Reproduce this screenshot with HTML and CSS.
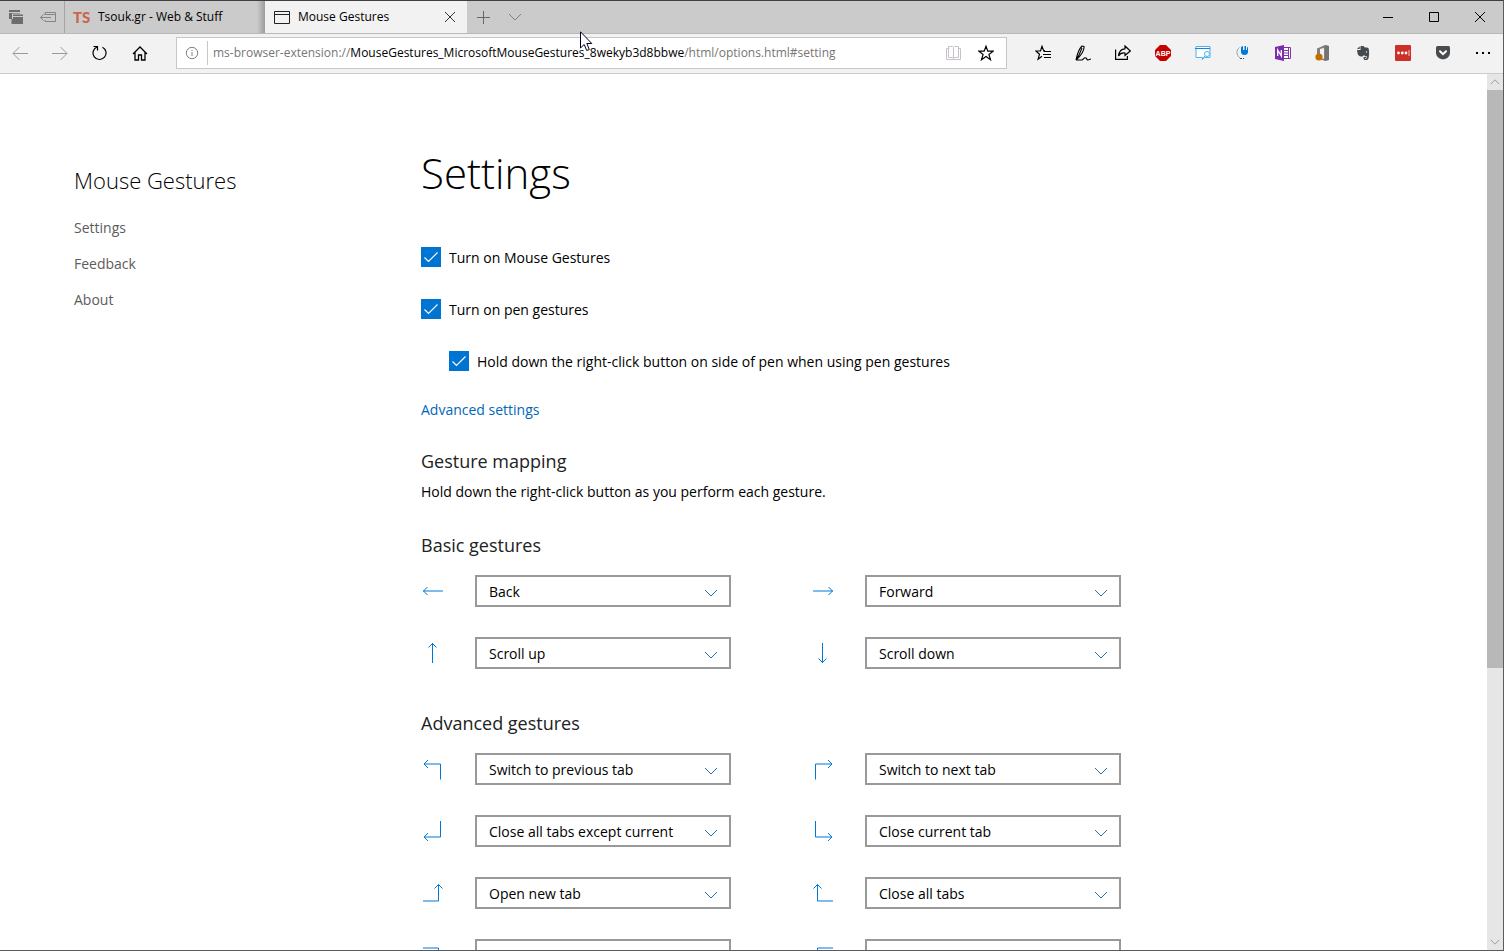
FILE: index.html
```html
<!DOCTYPE html>
<html lang="en">
<head>
<meta charset="utf-8">
<title>Mouse Gestures</title>
<link rel="stylesheet" href="styles.css">
</head>
<body>
<svg class="defs" aria-hidden="true">
  <symbol id="chevron" viewBox="0 0 14 8"><path d="M1 1l6 6 6-6"/></symbol>
</svg>
<div class="window">
  <header class="tabbar">
    <div class="tab-tools">
      <button class="tool" aria-label="Tabs you've set aside"><svg width="16" height="16" viewBox="0 0 16 16"><path fill="#6d6d6d" d="M1 1h11v3.500H4V10H1zM5 5.500h10V15H3.500V10H5z"/><path stroke="#cbcbcb" d="M1 3.500h11M5 7.500h10"/></svg></button>
      <button class="tool" aria-label="Set these tabs aside"><svg width="16" height="16" viewBox="0 0 16 16" fill="none" stroke="#858585"><path d="M5 6V3.500h10.500v9H5V11M5 5.500h10.500M.5 8.500H11M3.500 5.500l-3 3 3 3"/></svg></button>
    </div>
    <div class="tab tab-first"><span class="favicon">TS</span><span>Tsouk.gr - Web &amp; Stuff</span></div>
    <div class="tab tab-active">
      <svg width="16" height="14" viewBox="0 0 16 14" fill="none" stroke="#222"><path d="M.5 1.500h15v12H.5zM.5 4.500h15"/></svg>
      <span class="tab-title">Mouse Gestures</span>
      <button class="close" aria-label="Close tab"><svg width="12" height="12" viewBox="0 0 12 12" stroke="#333"><path d="M1 1l10 10M11 1L1 11"/></svg></button>
    </div>
    <button class="new" aria-label="New tab"><svg width="14" height="14" viewBox="0 0 14 14" stroke="#666"><path d="M7.500 1v13M1 7.500h13"/></svg></button>
    <button class="new" aria-label="Show tab previews"><svg class="chev grey" width="14" height="8"><use href="#chevron"/></svg></button>
    <div class="controls">
      <button aria-label="Minimize"><svg width="12" height="12" viewBox="0 0 12 12" stroke="#000"><path d="M1 6.500h10"/></svg></button>
      <button aria-label="Maximize"><svg width="12" height="12" viewBox="0 0 12 12" stroke="#000" fill="none"><path d="M1.500 1.500h9v9h-9z"/></svg></button>
      <button aria-label="Close"><svg width="12" height="12" viewBox="0 0 12 12" stroke="#000"><path d="M1 1l10 10M11 1L1 11"/></svg></button>
    </div>
  </header>

  <div class="toolbar">
    <nav class="buttons" aria-label="Navigation">
      <button aria-label="Back"><svg width="16" height="16" viewBox="0 0 16 16" fill="none" stroke="#999"><path d="M1 8.500h15M7.500 2L1 8.500 7.500 15"/></svg></button>
      <button aria-label="Forward"><svg width="16" height="16" viewBox="0 0 16 16" fill="none" stroke="#999"><path d="M0 8.500h15M8.500 2L15 8.500 8.500 15"/></svg></button>
      <button aria-label="Refresh"><svg width="16" height="16" viewBox="0 0 16 16" fill="none" stroke="#000" stroke-width="1.200"><path d="M10.500 2.200A6.500 6.500 0 1 1 5 2M1.500 1.500H5.500V5.500"/></svg></button>
      <button aria-label="Home"><svg width="16" height="16" viewBox="0 0 16 16" fill="none" stroke="#000" stroke-width="1.300"><path d="M1 9l7-7 7 7M3 7.500v7.500h3.500v-5h3v5H13V7.500"/></svg></button>
    </nav>
    <div class="address">
      <button class="info" aria-label="Site information"><svg width="14" height="14" viewBox="0 0 14 14" fill="none" stroke="#808080"><circle cx="7" cy="7" r="5.700"/><path d="M7 6v4M7 4v1"/></svg></button>
      <div class="url" role="textbox" contenteditable="true" spellcheck="false" aria-label="Address">ms-browser-extension://<span class="host">MouseGestures_MicrosoftMouseGestures_8wekyb3d8bbwe</span>/html/options.html#setting</div>
      <button class="addr-btn" aria-label="Reading view"><svg width="16" height="16" viewBox="0 0 16 16" fill="none" stroke="#cbbfcc"><path d="M7.500 2.500L6.500 1.500h-4v11h4l1 1 1-1h4v-11h-4l-1 1v11M2.500 3.500h-2v11h14v-11h-2"/></svg></button>
      <button class="addr-btn" aria-label="Add to favorites"><svg width="16" height="16" viewBox="0 0 16 16" fill="none" stroke="#000" stroke-width="1.200"><path d="M8 1.200l1.800 5h5.400l-4.300 3.200 1.600 5.300L8 11.500l-4.500 3.200 1.600-5.300L.8 6.200h5.400z"/></svg></button>
    </div>
    <div class="buttons">
      <button aria-label="Hub"><svg width="16" height="16" viewBox="0 0 16 16" fill="none" stroke="#000" stroke-width="1.200"><path d="M10 5.700L8.500 5.200 7 1.300 5.500 6H.8l3.700 3.200-1.400 5L7 11.300M8.500 6.500H16M8 9.500h8M9 12.500h7"/></svg></button>
      <button aria-label="Add notes"><svg width="16" height="16" viewBox="0 0 16 16" fill="none" stroke="#000" stroke-width="1.100"><path d="M1 15C2 10 4 4 7 1l2 .5C9.500 5 6 11 1 15l3-5 3-7M1 15h6c2-1 2-3 4-2 1 1 1 2 2 2l3-1"/></svg></button>
      <button aria-label="Share"><svg width="16" height="16" viewBox="0 0 16 16" fill="none" stroke="#000" stroke-width="1.200"><path d="M.6 4.500v9.900h11.800V11M10 1l5.300 5L10 10.500V8C7 7.500 5 8.500 3.500 11 4 6.500 6.500 4 10 3.800z"/></svg></button>
      <button aria-label="Adblock Plus"><svg width="16" height="16" viewBox="0 0 16 16"><path fill="#c80000" d="M5 0h6l5 5v6l-5 5H5l-5-5V5z"/><text class="abp" x="8" y="11" text-anchor="middle">ABP</text></svg></button>
      <button aria-label="Page Analyzer"><svg width="16" height="16" viewBox="0 0 16 16" fill="none" stroke="#4db2f0"><path fill="#fff" d="M1 1.500h14v11H9.500l-2 2v-2H1z"/><path stroke="#0c8ae0" d="M0 3.500h15"/><circle cx="12" cy="9" r="2.500" fill="#fff"/><path d="M10 11l-3 3.500"/></svg></button>
      <button aria-label="Mouse Gestures"><svg width="16" height="16" viewBox="0 0 16 16" fill="none"><path fill="#0078d7" d="M6 2l2-1v4h1.500V1h1.500v4h1V1.500L13 3v4c0 2-1.500 3-3.500 3S6 9 6 7z"/><path stroke="#8aa5bd" d="M4.500 2.500C1 5 1 10 5 13"/><path stroke="#345" stroke-dasharray="2 1" d="M5 13.500h4"/></svg></button>
      <button aria-label="OneNote Clipper"><svg width="16" height="16" viewBox="0 0 16 16"><path fill="#fff" stroke="#8030a8" d="M8 2.500h7.500v11H8"/><path stroke="#8030a8" d="M9 5.500h4M9 8h4M9 10.500h4M13.500 2v12"/><path fill="#7b2ca8" d="M0 2l9-2v16l-9-2z"/><path fill="none" stroke="#fff" stroke-width="1.300" d="M2.700 11V5l3.600 6V5"/></svg></button>
      <button aria-label="Office Online"><svg width="16" height="16" viewBox="0 0 16 16"><path fill="#808080" d="M2 3.500L10 0l4 1v14l-4 1-8-3 7 .7V3L5 4v7l-3 1z"/><path fill="#666" d="M10 0l4 1v14l-4 1z" opacity=".5"/><circle cx="4" cy="12" r="3.600" fill="#c46e00"/></svg></button>
      <button aria-label="Evernote"><svg width="16" height="16" viewBox="0 0 16 16"><path fill="#454a4e" d="M5.500 1h3l1 1.200 3.500.5c1 .2 1.500 5.500.8 9C13.500 15 12 15 9.800 15c-1.600-.3-2-3 .2-3.200h1v1.200h-1c-.5.400 0 1 1 .7 1-.5.800-2.200.5-2.700-1.500.2-2-.5-2.500-1L8 11.200C5 12 3 11 2.500 8L2 5h3.500z"/><path fill="#454a4e" d="M2 4l2.700-2.700V4z"/><circle cx="11.500" cy="7" r=".7" fill="#f2f2f2"/></svg></button>
      <button aria-label="LastPass"><svg width="16" height="16" viewBox="0 0 16 16"><rect width="16" height="16" rx="1" fill="#cc3127"/><circle cx="3.500" cy="8" r="1.400" fill="#fff"/><circle cx="7.300" cy="8" r="1.400" fill="#fff"/><circle cx="11" cy="8" r="1.400" fill="#fff"/><path stroke="#fff" stroke-opacity=".7" d="M14 5v6"/></svg></button>
      <button aria-label="Save to Pocket"><svg width="16" height="16" viewBox="0 0 16 16"><path fill="#484c4f" d="M1 2.500Q1 1 2.500 1h11Q15 1 15 2.500V7.500c0 9-14 9-14 0z"/><path fill="none" stroke="#fff" stroke-width="2" stroke-linecap="round" d="M5 6.200l3 3 3-3"/></svg></button>
      <button aria-label="More"><svg width="16" height="16" viewBox="0 0 16 16"><path d="M1 7h2v2H1zM7 7h2v2H7zM13 7h2v2h-2z"/></svg></button>
    </div>
  </div>

  <div class="viewport">
    <div class="page">
      <aside class="side">
        <div class="brand">Mouse Gestures</div>
        <nav class="links"><a href="#setting">Settings</a><a href="#feedback">Feedback</a><a href="#about">About</a></nav>
      </aside>
      <main>
        <h1>Settings</h1>
        <div class="checks">
          <label class="check"><input type="checkbox" checked>Turn on Mouse Gestures</label>
          <label class="check"><input type="checkbox" checked>Turn on pen gestures</label>
          <label class="check nested"><input type="checkbox" checked>Hold down the right-click button on side of pen when using pen gestures</label>
        </div>
        <a class="advanced" href="#advanced">Advanced settings</a>
        <h2>Gesture mapping</h2>
        <p>Hold down the right-click button as you perform each gesture.</p>
        <h3>Basic gestures</h3>
        <div class="grid">
          <div class="gesture"><svg class="arrow"><path d="M22 12H2M6.500 8L2.500 12l4 4"/></svg><div class="pick"><select aria-label="Left"><option>Back</option></select><svg class="chev"><use href="#chevron"/></svg></div></div>
          <div class="gesture"><svg class="arrow"><path d="M2 12h20M17.500 8l4 4-4 4"/></svg><div class="pick"><select aria-label="Right"><option>Forward</option></select><svg class="chev"><use href="#chevron"/></svg></div></div>
          <div class="gesture"><svg class="arrow"><path d="M11.500 22V2M7.500 6.500l4-4 4 4"/></svg><div class="pick"><select aria-label="Up"><option>Scroll up</option></select><svg class="chev"><use href="#chevron"/></svg></div></div>
          <div class="gesture"><svg class="arrow"><path d="M11.500 2v20M7.500 17.500l4 4 4-4"/></svg><div class="pick"><select aria-label="Down"><option>Scroll down</option></select><svg class="chev"><use href="#chevron"/></svg></div></div>
        </div>
        <h3 class="later">Advanced gestures</h3>
        <div class="grid">
          <div class="gesture"><svg class="arrow"><path d="M19.500 22.500V7H3M7 3L3 7l4 4"/></svg><div class="pick"><select aria-label="Up, then left"><option>Switch to previous tab</option></select><svg class="chev"><use href="#chevron"/></svg></div></div>
          <div class="gesture"><svg class="arrow"><path d="M4.500 22.500V7H21M17 3l4 4-4 4"/></svg><div class="pick"><select aria-label="Up, then right"><option>Switch to next tab</option></select><svg class="chev"><use href="#chevron"/></svg></div></div>
          <div class="gesture"><svg class="arrow"><path d="M19.500 2v16H3M7 14l-4 4 4 4"/></svg><div class="pick"><select aria-label="Down, then left"><option>Close all tabs except current</option></select><svg class="chev"><use href="#chevron"/></svg></div></div>
          <div class="gesture"><svg class="arrow"><path d="M4.500 2v16H21M17 14l4 4-4 4"/></svg><div class="pick"><select aria-label="Down, then right"><option>Close current tab</option></select><svg class="chev"><use href="#chevron"/></svg></div></div>
          <div class="gesture"><svg class="arrow"><path d="M2 20h15.500V3.500M13.500 7.500l4-4 4 4"/></svg><div class="pick"><select aria-label="Right, then up"><option>Open new tab</option></select><svg class="chev"><use href="#chevron"/></svg></div></div>
          <div class="gesture"><svg class="arrow"><path d="M22 20H6.500V3.500M2.500 7.500l4-4 4 4"/></svg><div class="pick"><select aria-label="Left, then up"><option>Close all tabs</option></select><svg class="chev"><use href="#chevron"/></svg></div></div>
          <div class="gesture"><svg class="arrow"><path d="M2 5h15.500v16M13.500 17l4 4 4-4"/></svg><div class="pick"><select aria-label="Right, then down"></select><svg class="chev"><use href="#chevron"/></svg></div></div>
          <div class="gesture"><svg class="arrow"><path d="M22 5H6.500v16M2.500 17l4 4 4-4"/></svg><div class="pick"><select aria-label="Left, then down"></select><svg class="chev"><use href="#chevron"/></svg></div></div>
        </div>
      </main>
    </div>
    <div class="scrollbar">
      <button aria-label="Scroll page up"><svg class="chev grey flip" width="10" height="6"><use href="#chevron"/></svg></button>
      <div class="track"><div class="thumb"></div></div>
      <button aria-label="Scroll page down"><svg class="chev grey" width="10" height="6"><use href="#chevron"/></svg></button>
    </div>
  </div>
</div>
<svg class="cursor" width="13" height="21" viewBox="0 0 13 21"><path fill="#fff" stroke="#000020" d="M.5.800V17l3.700-3.500 2.500 6 2.600-1-2.500-6h5z"/></svg>
</body>
</html>
```
FILE: styles.css
```css
* { box-sizing: border-box; }
body {
  margin: 0;
  font-family: "Open Sans", "Noto Sans", sans-serif;
  font-size: 14px;
  line-height: 20px;
  color: #000;
}
button { border: 0; padding: 0; background: none; display: flex; align-items: center; justify-content: center; }
svg { flex: none; }
a { text-decoration: none; }
.defs { display: none; }
.window {
  height: 100vh;
  display: flex;
  flex-direction: column;
  border: 1px solid #5c5a5c;
  border-left: 0;
  border-top-color: #413d41;
  overflow: hidden;
}

.tabbar { display: flex; height: 32px; flex: none; background: #cbcbcb; font-size: 12px; }
.tab-tools { display: flex; width: 65px; border-right: 1px solid #a5a5a5; }
.tool { width: 32px; }
.tab { display: flex; align-items: center; gap: 8px; padding-left: 8px; }
.tab-first { width: 200px; background: linear-gradient(to right, transparent 96%, #9b9b9b); }
.favicon { width: 17px; font: 900 15px/20px Lato, sans-serif; color: #c9664f; }
.tab-active { width: 202px; padding: 0 11px 0 9px; background: #f2f2f2; }
.tab-title { flex: 1; }
.close { width: 12px; height: 32px; }
.new { width: 32px; }
.controls { display: flex; margin-left: auto; }
.controls button { width: 46px; }

.toolbar {
  display: flex;
  align-items: center;
  height: 41px;
  flex: none;
  padding-bottom: 2px;
  background: #f2f2f2;
  border-top: 1px solid #b8b8b8;
  border-bottom: 1px solid #ccc;
}
.buttons { display: flex; }
.buttons button { width: 40px; height: 36px; }
.abp { font: bold 7px "Liberation Sans", sans-serif; fill: #fff; }
.address {
  flex: 1;
  min-width: 0;
  display: flex;
  align-items: center;
  height: 32px;
  margin: 0 16px;
  border: 1px solid #c8c6c8;
  background: #fff;
}
.info { width: 31px; height: 24px; border-right: 1px solid #c8c6c8; }
.url { flex: 1; min-width: 0; padding-left: 5px; font-size: 12px; color: #767676; white-space: nowrap; overflow: hidden; outline: 0; }
.host { color: #000; }
.addr-btn { width: 32px; height: 30px; }
.addr-btn:last-child { width: 36px; padding-right: 4px; }

.viewport { flex: 1; min-height: 0; display: flex; }
.page { flex: 1; min-width: 0; display: flex; overflow: hidden; padding-left: 74px; }
.side { width: 347px; flex: none; padding-top: 90px; }
.brand { font-size: 22px; line-height: 32px; font-weight: 300; }
.links { display: flex; flex-direction: column; align-items: flex-start; gap: 16px; margin-top: 22px; }
.links a { color: #5c5c5c; }
main { flex: 1; padding-top: 69px; }
h1, h2, h3, p { margin: 0; }
h1 { font-size: 42px; line-height: 60px; font-weight: 300; }
.checks { display: flex; flex-direction: column; align-items: flex-start; gap: 30px; margin: 44px 0 27px; }
.check { display: flex; align-items: flex-start; gap: 8px; line-height: 22px; }
.nested { margin-left: 28px; }
.check input {
  appearance: none;
  width: 20px;
  height: 20px;
  margin: 0;
  background: #0074d1 url("data:image/svg+xml,%3Csvg xmlns='http://www.w3.org/2000/svg' viewBox='0 0 20 20'%3E%3Cpath d='M3.500 10.500l4 4 9-9' fill='none' stroke='white' stroke-width='1.200'/%3E%3C/svg%3E");
}
.advanced { display: block; width: max-content; color: #0067b8; }
h2, h3 { font-size: 18px; line-height: 28px; font-weight: 400; color: #222; }
h2 { margin: 27px 0 7px; }
h3 { margin: 29px 0 16px; }
.later { margin-top: 40px; }
.grid { display: grid; grid-template-columns: 310px 310px; gap: 30px 80px; }
.gesture { display: flex; justify-content: space-between; }
.arrow { width: 24px; height: 24px; margin-top: 4px; fill: none; stroke: #0078d7; stroke-width: 1; }
.pick { position: relative; width: 256px; }
.pick select {
  appearance: none;
  display: block;
  width: 100%;
  height: 32px;
  padding: 2px 12px 0;
  border: 2px solid #999;
  border-radius: 0;
  background: #fff;
  font: inherit;
  color: #000;
}
.chev { fill: none; stroke: #2b6ea8; }
.pick .chev { position: absolute; right: 13px; top: 14px; width: 14px; height: 8px; pointer-events: none; }
.chev.grey { stroke: #808080; }
.flip { transform: rotate(180deg); }

.scrollbar { width: 16px; flex: none; display: flex; flex-direction: column; background: #e6e6e6; }
.scrollbar button { height: 16px; }
.track { flex: 1; }
.thumb { height: 68.5%; background: #b8b8b8; }
.cursor { position: absolute; left: 580px; top: 31px; }
```
